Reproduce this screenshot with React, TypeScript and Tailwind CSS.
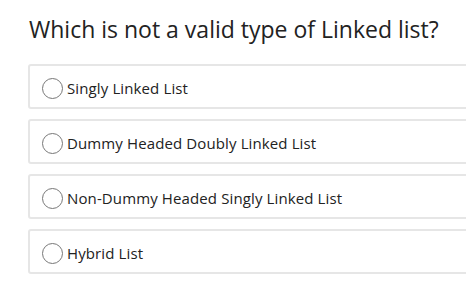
import React from "react";

const options = [
  "Singly Linked List",
  "Dummy Headed Doubly Linked List",
  "Non-Dummy Headed Singly Linked List",
  "Hybrid List",
];

export default function App() {
  return (
    <div
      className="w-[466px] h-[304px] bg-white overflow-hidden pl-[28px] pt-[13px]"
      style={{ fontFamily: '"Open Sans", "Noto Sans", sans-serif' }}
    >
      <h1 className="text-[23px] leading-[33px] text-[#222] ml-[1px]">
        Which is not a valid type of Linked list?
      </h1>
      <div className="mt-[18px] flex flex-col gap-[10px] w-[460px]">
        {options.map((o) => (
          <div
            key={o}
            className="h-[45px] border-2 border-[#e6e6e6] rounded-[3px] flex items-center pl-[12px] pt-[4px]"
          >
            <span className="w-[21px] h-[21px] rounded-full border border-[#777] bg-white shrink-0" />
            <span className="ml-[4px] text-[15px] tracking-[0.12px] text-[#222]">{o}</span>
          </div>
        ))}
      </div>
    </div>
  );
}
